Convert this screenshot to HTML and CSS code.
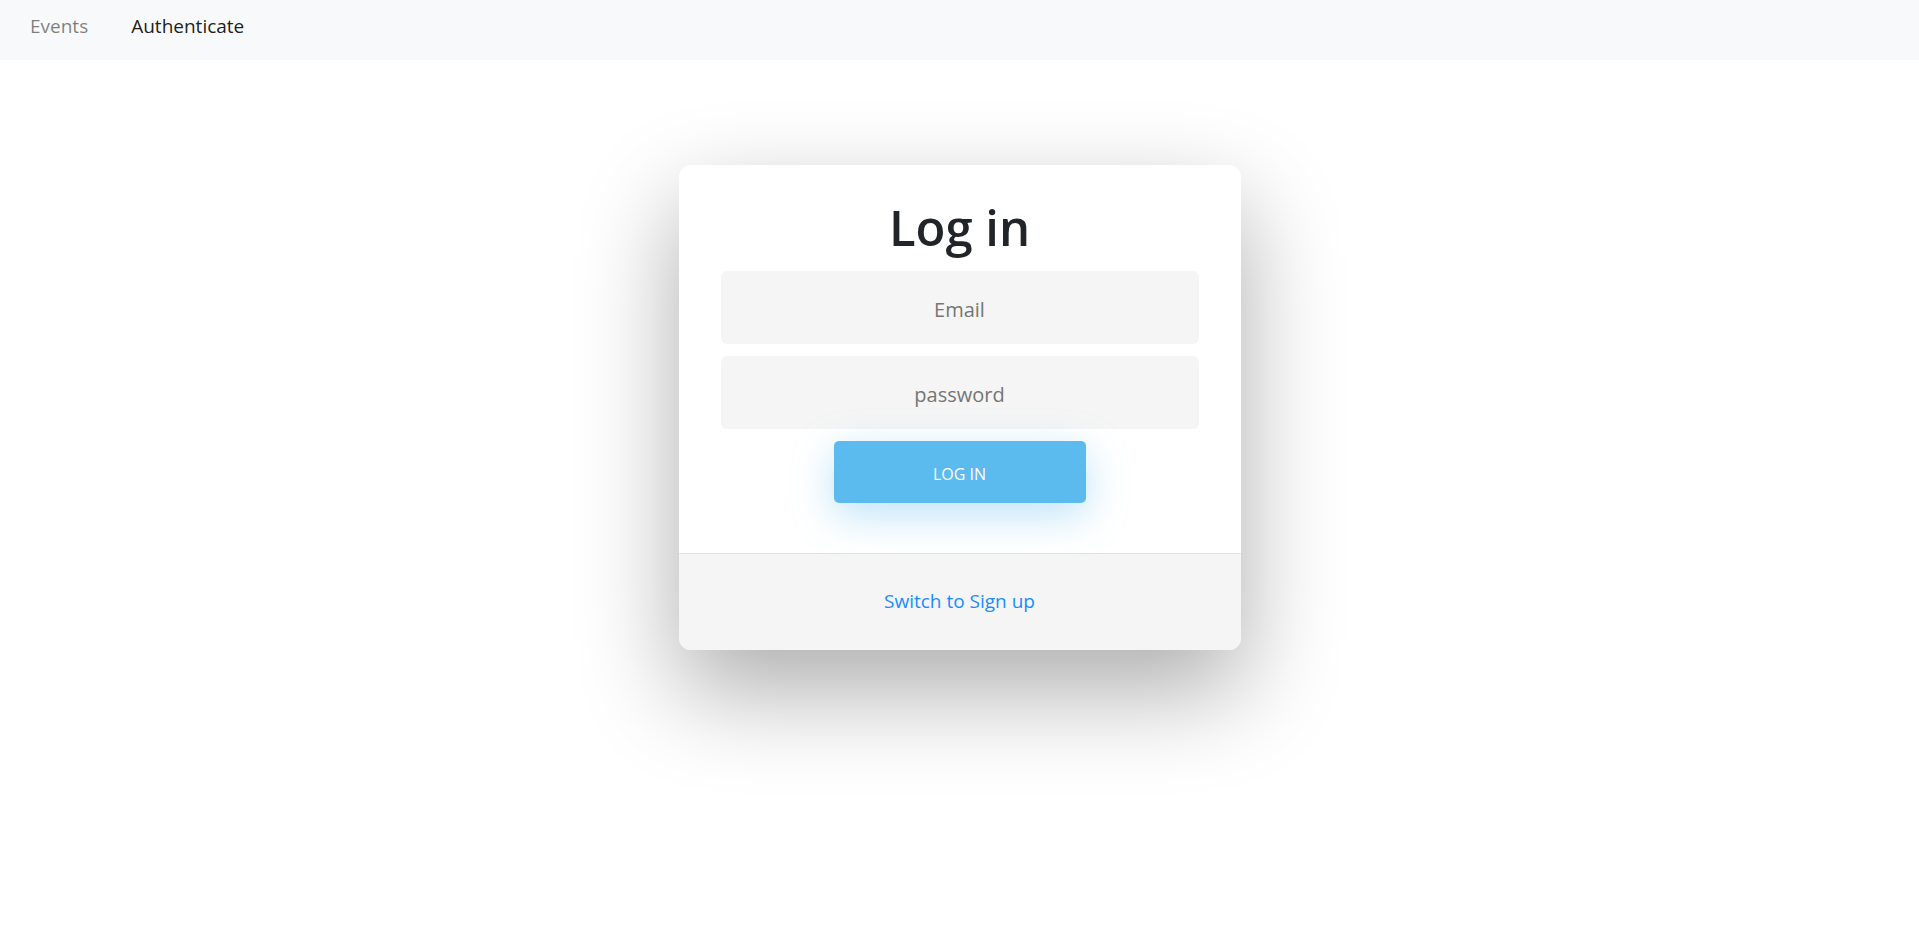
FILE: index.html
```html
<!DOCTYPE html>
<html lang="en">
<head>
<meta charset="utf-8">
<title>Log in</title>
<link rel="stylesheet" href="styles.css">
</head>
<body>
<nav class="navbar">
  <a class="nav-link" href="#">Events</a>
  <a class="nav-link active" href="#">Authenticate</a>
</nav>
<main class="page">
  <section class="auth-card">
    <form class="auth-body">
      <h1 class="auth-title">Log in</h1>
      <input class="auth-input" type="email" placeholder="Email">
      <input class="auth-input" type="password" placeholder="password">
      <button class="auth-button" type="button">Log in</button>
    </form>
    <div class="auth-footer">
      <a class="switch-link" href="#">Switch to Sign up</a>
    </div>
  </section>
</main>
</body>
</html>
```
FILE: styles.css
```css
* { box-sizing: border-box; }

html, body {
  margin: 0;
  padding: 0;
  background: #ffffff;
  font-family: "Open Sans", "Noto Sans", "Liberation Sans", sans-serif;
  color: #212529;
}

.navbar {
  height: 60px;
  background: #f8f9fa;
  display: flex;
  align-items: flex-start;
  padding: 11px 0 0 30px;
  gap: 43px;
}

.nav-link {
  font-size: 19px;
  line-height: 30px;
  text-decoration: none;
  color: rgba(0, 0, 0, 0.5);
}

.nav-link.active {
  color: rgba(0, 0, 0, 0.9);
}

.page {
  display: flex;
  justify-content: center;
  align-items: flex-start;
  padding-top: 105px;
  min-height: calc(100vh - 60px);
}

.auth-card {
  width: 562px;
  background: #ffffff;
  border-radius: 12px;
  overflow: hidden;
  box-shadow: 0 40px 100px rgba(0, 0, 0, 0.33);
}

.auth-body {
  display: flex;
  flex-direction: column;
  align-items: center;
  padding: 32px 0 50px;
  margin: 0;
}

.auth-title {
  margin: 0 0 14px;
  font-size: 49px;
  line-height: 60px;
  font-weight: 600;
  color: #212529;
}

.auth-input {
  width: 478px;
  height: 73px;
  border: none;
  border-radius: 6px;
  background: #f5f5f5;
  text-align: center;
  font-family: inherit;
  font-size: 20px;
  color: #495057;
  outline: none;
  margin: 0 0 12px;
  padding: 3px 0 0;
}

.auth-input::placeholder {
  color: #757575;
}

.auth-button {
  width: 252px;
  height: 62px;
  border: none;
  border-radius: 5px;
  background: #5bbaee;
  color: #ffffff;
  font-family: inherit;
  font-size: 16px;
  text-transform: uppercase;
  box-shadow: 0 12px 40px rgba(91, 186, 238, 0.4);
  cursor: pointer;
  padding: 4px 0 0;
}

.auth-footer {
  border-top: 1px solid #dee2e6;
  background: #f5f5f5;
  padding: 32px 0 34px;
  text-align: center;
}

.switch-link {
  font-size: 19px;
  line-height: 30px;
  color: #1a8cff;
  text-decoration: none;
}
```
